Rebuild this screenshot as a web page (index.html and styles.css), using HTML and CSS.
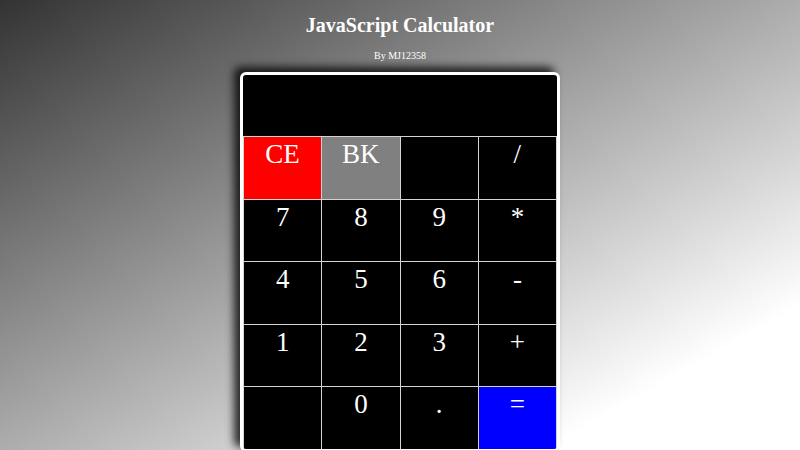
FILE: index.html
```html
<!DOCTYPE html>
<html lang="en">
<head>
<meta charset="utf-8">
<title>JavaScript Calculator</title>
<link rel="stylesheet" href="styles.css">
</head>
<body>
<header class="header">
  <h1 class="title">JavaScript Calculator</h1>
  <p class="byline">By MJ12358</p>
</header>
<main class="calc">
  <div class="display"></div>
  <div class="keys">
    <div class="key key-clear">CE</div>
    <div class="key key-back">BK</div>
    <div class="key"></div>
    <div class="key">/</div>
    <div class="key">7</div>
    <div class="key">8</div>
    <div class="key">9</div>
    <div class="key">*</div>
    <div class="key">4</div>
    <div class="key">5</div>
    <div class="key">6</div>
    <div class="key">-</div>
    <div class="key">1</div>
    <div class="key">2</div>
    <div class="key">3</div>
    <div class="key">+</div>
    <div class="key"></div>
    <div class="key">0</div>
    <div class="key">.</div>
    <div class="key key-equals">=</div>
  </div>
</main>
</body>
</html>
```
FILE: styles.css
```css
html {
  height: 100%;
  overflow: hidden;
  background: linear-gradient(to bottom right, #333333 0%, #ffffff 84%) fixed;
}

body {
  margin: 0;
  font-family: "Liberation Serif", "Times New Roman", serif;
  color: #ffffff;
}

.header {
  text-align: center;
  padding-top: 14px;
}

.title {
  margin: 0;
  font-size: 20px;
  line-height: 23px;
  font-weight: bold;
}

.byline {
  margin: 13px 0 0;
  font-size: 10px;
  line-height: 12px;
}

.calc {
  width: 314px;
  margin: 10px auto 0;
  border: 3px solid #ffffff;
  border-radius: 6px;
  background: #d4d4d4;
  overflow: hidden;
  box-shadow: -6px -5px 8px rgba(0, 0, 0, 0.8);
}

.display {
  height: 61px;
  background: #000000;
}

.keys {
  display: grid;
  grid-template-columns: repeat(4, 1fr);
  grid-auto-rows: 61.5px;
  gap: 1px;
  padding: 1px 1px 0;
}

.key {
  background: #000000;
  color: #ffffff;
  font-size: 27px;
  text-align: center;
  padding-top: 2px;
}

.key-clear {
  background: #ff0000;
}

.key-back {
  background: #808080;
}

.key-equals {
  background: #0000ff;
}
```
